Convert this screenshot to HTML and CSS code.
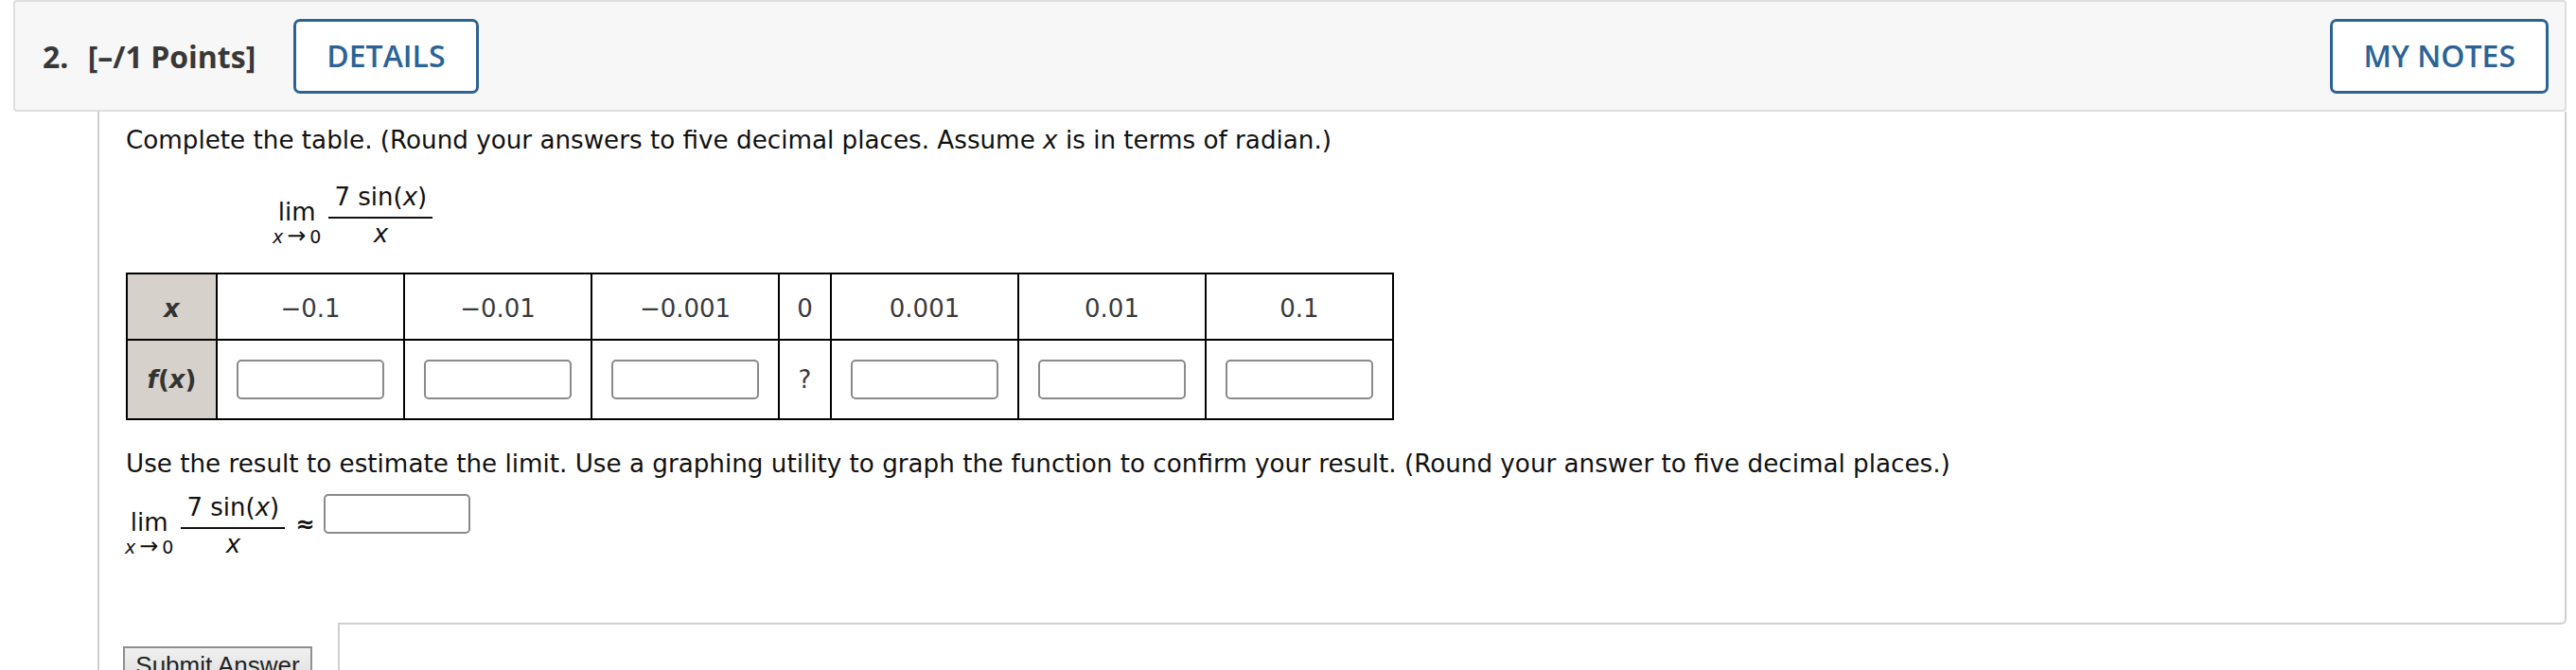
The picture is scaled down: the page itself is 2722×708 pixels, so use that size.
FILE: index.html
```html
<!DOCTYPE html>
<html lang="en">
<head>
<meta charset="utf-8">
<title>Question 2</title>
<link rel="stylesheet" href="styles.css">
</head>
<body>
<div class="page">
  <div class="header">
    <div class="qnum"><span class="num-lbl">2.</span> [–/1 Points]</div>
    <button class="outline-btn details">DETAILS</button>
    <button class="outline-btn notes">MY NOTES</button>
  </div>

  <div class="qbody">
    <p class="text first">Complete the table. (Round your answers to five decimal places. Assume <i>x</i> is in terms of radian.)</p>

    <div class="limit indent">
      <div class="lim-col">
        <span class="lim">lim</span>
        <span class="under"><i>x</i><span class="arrow">→</span>0</span>
      </div>
      <div class="frac">
        <span class="numer">7 sin(<i>x</i>)</span>
        <span class="denom"><i>x</i></span>
      </div>
    </div>

    <table class="vals">
      <tr class="r1">
        <th class="c-label"><div class="cell"><i>x</i></div></th>
        <td class="c-val"><div class="cell">−0.1</div></td>
        <td class="c-val"><div class="cell">−0.01</div></td>
        <td class="c-val"><div class="cell">−0.001</div></td>
        <td class="c-zero"><div class="cell">0</div></td>
        <td class="c-val"><div class="cell">0.001</div></td>
        <td class="c-val"><div class="cell">0.01</div></td>
        <td class="c-val"><div class="cell">0.1</div></td>
      </tr>
      <tr class="r2">
        <th class="c-label"><div class="cell"><i>f</i>(<i>x</i>)</div></th>
        <td class="c-val"><div class="cell"><input class="box" type="text"></div></td>
        <td class="c-val"><div class="cell"><input class="box" type="text"></div></td>
        <td class="c-val"><div class="cell"><input class="box" type="text"></div></td>
        <td class="c-zero"><div class="cell">?</div></td>
        <td class="c-val"><div class="cell"><input class="box" type="text"></div></td>
        <td class="c-val"><div class="cell"><input class="box" type="text"></div></td>
        <td class="c-val"><div class="cell"><input class="box" type="text"></div></td>
      </tr>
    </table>

    <p class="text second">Use the result to estimate the limit. Use a graphing utility to graph the function to confirm your result. (Round your answer to five decimal places.)</p>

    <div class="limit second-lim">
      <div class="lim-col">
        <span class="lim">lim</span>
        <span class="under"><i>x</i><span class="arrow">→</span>0</span>
      </div>
      <div class="frac">
        <span class="numer">7 sin(<i>x</i>)</span>
        <span class="denom"><i>x</i></span>
      </div>
      <span class="approx">≈</span>
      <input class="box answer" type="text">
    </div>
  </div>

  <div class="footer">
    <div class="submit-cell">
      <button class="submit">Submit Answer</button>
    </div>
    <div class="filler"></div>
  </div>
</div>
</body>
</html>
```

FILE: styles.css
```css
html, body {
  margin: 0;
  padding: 0;
  background: #fff;
}

body {
  font-family: "DejaVu Sans", Verdana, sans-serif;
  color: #111;
  overflow: hidden;
}

.page {
  padding: 0 10px 0 14px;
}

/* header bar */
.header {
  display: flex;
  align-items: center;
  box-sizing: border-box;
  height: 118px;
  background: #f7f7f7;
  border: 2px solid #dedede;
  border-radius: 4px;
  padding: 0 17px 0 29px;
}

.qnum {
  font-family: "Open Sans", sans-serif;
  font-weight: 700;
  font-size: 32px;
  color: #383838;
  white-space: nowrap;
}

.num-lbl {
  margin-right: 12px;
}

.outline-btn {
  box-sizing: border-box;
  height: 79px;
  padding: 0 32px;
  border: 3px solid #2c6396;
  border-radius: 7px;
  background: #fff;
  color: #2c6396;
  font-family: "Open Sans", sans-serif;
  font-weight: 600;
  font-size: 32px;
  line-height: 1;
}

.details {
  margin-left: 40px;
}

.notes {
  margin-left: auto;
}

/* question body */
.qbody {
  margin-left: 89px;
  border-left: 2px solid #cfcfcf;
  border-right: 2px solid #cfcfcf;
  border-bottom: 2px solid #cfcfcf;
  border-bottom-right-radius: 6px;
  padding: 12px 0 69px 28px;
}

.text {
  margin: 0;
  font-size: 26.2px;
  line-height: 36px;
  color: #111;
}

.text.second {
  margin-top: 28px;
}

/* limit expressions */
.limit {
  display: flex;
  align-items: flex-start;
  font-size: 26px;
  color: #111;
}

.limit.indent {
  margin-top: 28px;
  margin-left: 155px;
}

.limit.second-lim {
  margin-top: 14px;
  margin-left: -1px;
}

.lim-col {
  display: flex;
  flex-direction: column;
  align-items: center;
  margin-top: 17px;
}

.lim {
  line-height: 26px;
}

.under {
  font-size: 19px;
  line-height: 20px;
  margin-top: 2px;
  white-space: nowrap;
}

.arrow {
  font-size: 24px;
  line-height: 20px;
  margin: 0 4px;
}

.frac {
  display: flex;
  flex-direction: column;
  align-items: center;
  margin-left: 8px;
}

.numer {
  line-height: 28px;
  padding: 0 6px 7px;
  border-bottom: 2px solid #111;
  white-space: nowrap;
}

.denom {
  line-height: 28px;
  padding-top: 2px;
}

.approx {
  font-size: 24px;
  font-weight: 700;
  line-height: 26px;
  margin: 19px 10px 0 11px;
}

.answer {
  margin-top: 11px;
}

/* table */
.vals {
  margin-top: 27px;
  border-spacing: 0;
  border-top: 2px solid #000;
  border-left: 2px solid #000;
  font-size: 26px;
  color: #3a3a3a;
}

.vals th,
.vals td {
  border-right: 2px solid #000;
  border-bottom: 2px solid #000;
  padding: 0 20px;
  text-align: center;
}

.vals th {
  background: #d6d2cb;
  font-weight: 700;
  color: #333;
}

.vals .c-label { width: 55px; padding: 0 19px; }
.c-val { width: 156px; }
.vals .c-zero { width: 17px; padding: 0 18px; }

.cell {
  display: flex;
  align-items: center;
  justify-content: center;
  white-space: nowrap;
}

.r1 .cell { height: 68px; padding-top: 4px; box-sizing: border-box; }
.r2 .cell { height: 82px; }

.box {
  box-sizing: border-box;
  width: 156px;
  height: 42px;
  margin: 0;
  padding: 0 6px;
  border: 2px solid #8a8a8a;
  border-radius: 5px;
  background: #fff;
  font-family: "DejaVu Sans", sans-serif;
  font-size: 20px;
}

.answer.box {
  width: 155px;
}

/* footer */
.footer {
  display: flex;
  margin-top: -2px;
}

.submit-cell {
  box-sizing: border-box;
  width: 256px;
  flex: none;
  margin-left: 89px;
  padding: 25px 0 20px 25px;
  background: #fff;
  border-left: 2px solid #cfcfcf;
  border-right: 2px solid #cfcfcf;
}

.submit {
  box-sizing: border-box;
  width: 200px;
  font-family: "Liberation Sans", Arial, sans-serif;
  font-size: 26px;
  line-height: 29px;
  color: #222;
  padding: 4px 8px;
  border: 2px solid #8f8f8f;
  border-radius: 0;
  background: linear-gradient(#f0f0f0, #dedede);
  white-space: nowrap;
}

.filler {
  flex: 1;
}
```
